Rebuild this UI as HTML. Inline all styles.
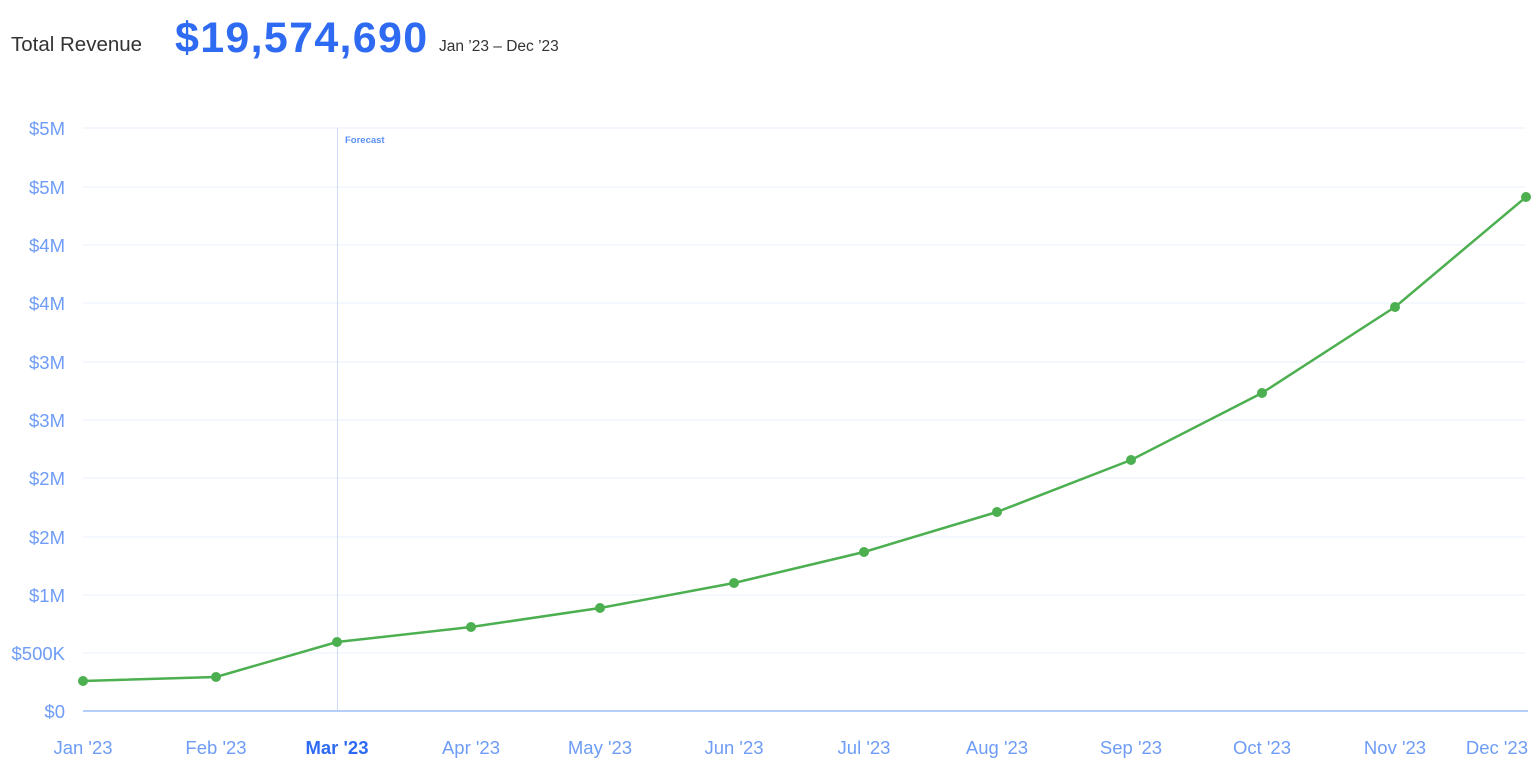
<!DOCTYPE html>
<html><head><meta charset="utf-8"><style>
html,body{margin:0;padding:0;background:#fff;width:1536px;height:768px;overflow:hidden;font-family:"Liberation Sans",sans-serif}
</style></head><body>
<svg width="1536" height="768" xmlns="http://www.w3.org/2000/svg" style="position:absolute;left:0;top:0">
<text x="11" y="51" font-size="20.5" fill="#333">Total Revenue</text>
<text x="175" y="52" font-size="43" font-weight="bold" fill="#2f6bf2" letter-spacing="1.3">$19,574,690</text>
<text x="439" y="51" font-size="15.5" fill="#333">Jan ’23 – Dec ’23</text>
<g stroke="#e8effd" stroke-width="1">
<line x1="83" x2="1525" y1="128" y2="128"/><line x1="83" x2="1525" y1="187" y2="187"/><line x1="83" x2="1525" y1="245" y2="245"/><line x1="83" x2="1525" y1="303" y2="303"/><line x1="83" x2="1525" y1="362" y2="362"/><line x1="83" x2="1525" y1="420" y2="420"/><line x1="83" x2="1525" y1="478" y2="478"/><line x1="83" x2="1525" y1="537" y2="537"/><line x1="83" x2="1525" y1="595" y2="595"/><line x1="83" x2="1525" y1="653" y2="653"/>
</g>
<line x1="337.5" x2="337.5" y1="128" y2="711" stroke="#cddcfb"/>
<text x="345" y="143" font-size="9.5" font-weight="bold" fill="#5b8ff5">Forecast</text>
<line x1="83" x2="1528" y1="711" y2="711" stroke="#9dbdf9" stroke-width="1.5"/>
<g font-size="18.5" fill="#6e9cf7" text-anchor="end">
<text x="65" y="135">$5M</text><text x="65" y="194">$5M</text><text x="65" y="252">$4M</text><text x="65" y="310">$4M</text><text x="65" y="369">$3M</text><text x="65" y="427">$3M</text><text x="65" y="485">$2M</text><text x="65" y="544">$2M</text><text x="65" y="602">$1M</text><text x="65" y="660">$500K</text><text x="65" y="718">$0</text>
</g>
<g font-size="18.5" fill="#6e9cf7" text-anchor="middle">
<text x="83" y="754">Jan '23</text><text x="216" y="754">Feb '23</text><text x="337" y="754" font-weight="bold" fill="#2f6bf2">Mar '23</text><text x="471" y="754">Apr '23</text><text x="600" y="754">May '23</text><text x="734" y="754">Jun '23</text><text x="864" y="754">Jul '23</text><text x="997" y="754">Aug '23</text><text x="1131" y="754">Sep '23</text><text x="1262" y="754">Oct '23</text><text x="1395" y="754">Nov '23</text><text x="1528" y="754" text-anchor="end">Dec '23</text>
</g>
<polyline fill="none" stroke="#4caf50" stroke-width="2.5" stroke-linejoin="round" points="83,681 216,677 337,642 471,627 600,608 734,583 864,552 997,512 1131,460 1262,393 1395,307 1526,197"/>
<g fill="#4caf50">
<circle cx="83" cy="681" r="5"/><circle cx="216" cy="677" r="5"/><circle cx="337" cy="642" r="5"/><circle cx="471" cy="627" r="5"/><circle cx="600" cy="608" r="5"/><circle cx="734" cy="583" r="5"/><circle cx="864" cy="552" r="5"/><circle cx="997" cy="512" r="5"/><circle cx="1131" cy="460" r="5"/><circle cx="1262" cy="393" r="5"/><circle cx="1395" cy="307" r="5"/><circle cx="1526" cy="197" r="5"/>
</g>
</svg>
</body></html>
